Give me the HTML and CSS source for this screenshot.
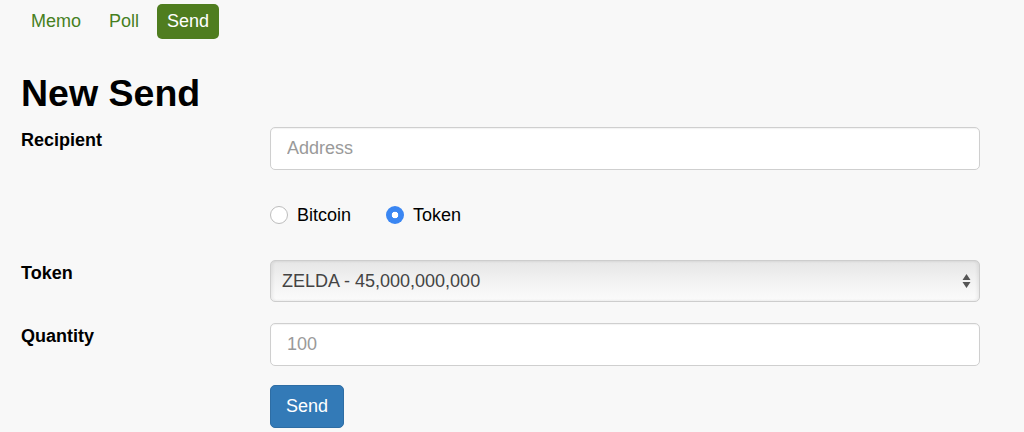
FILE: index.html
```html
<!DOCTYPE html>
<html>
<head>
<meta charset="utf-8">
<link rel="stylesheet" href="styles.css">
</head>
<body>
<div class="page">
  <nav class="nav">
    <a class="nav-link" href="#">Memo</a>
    <a class="nav-link" href="#">Poll</a>
    <a class="nav-link active" href="#">Send</a>
  </nav>
  <h1 class="title">New Send</h1>
  <form class="form">
    <label class="label">Recipient</label>
    <div class="control"><input class="input" type="text" placeholder="Address"></div>

    <div class="label"></div>
    <div class="control radios">
      <label class="radio"><span class="dot"></span>Bitcoin</label>
      <label class="radio"><span class="dot checked"></span>Token</label>
    </div>

    <label class="label">Token</label>
    <div class="control">
      <div class="select-wrap">
        <select class="select"><option>ZELDA - 45,000,000,000</option></select>
        <svg class="arrows" width="9" height="16" viewBox="0 0 9 16"><path d="M4.5 1 L8.5 7 L0.5 7 Z M4.5 15 L0.5 9 L8.5 9 Z" fill="#555"/></svg>
      </div>
    </div>

    <label class="label">Quantity</label>
    <div class="control"><input class="input" type="text" placeholder="100"></div>

    <div class="label"></div>
    <div class="control"><button class="btn" type="button">Send</button></div>
  </form>
</div>
</body>
</html>
```
FILE: styles.css
```css
html, body {
  margin: 0;
  padding: 0;
  background: #f8f8f8;
}
body {
  font-family: "Liberation Sans", Arial, Helvetica, sans-serif;
  font-size: 18px;
  color: #000;
}
.page {
  padding: 4px 0 0 21px;
}
.nav {
  display: flex;
  gap: 8px;
  height: 35px;
}
.nav-link {
  display: block;
  padding: 0 10px;
  line-height: 35px;
  height: 35px;
  color: #47801f;
  text-decoration: none;
  border-radius: 5px;
}
.nav-link.active {
  background: #4f7d1f;
  color: #fff;
}
.title {
  margin: 33px 0 0 0;
  font-size: 37.5px;
  line-height: 42px;
  font-weight: bold;
  height: 42px;
}
.form {
  margin-top: 13px;
  display: grid;
  grid-template-columns: 249px 710px;
}
.label {
  font-weight: bold;
  line-height: 26px;
}
.input {
  box-sizing: border-box;
  width: 710px;
  height: 43px;
  border: 1px solid #cfcfcf;
  border-radius: 5px;
  background: #fff;
  padding: 0 16px;
  font-family: inherit;
  font-size: 18px;
  color: #333;
  box-shadow: inset 0 1px 1px rgba(0,0,0,0.05);
  outline: none;
}
.input::placeholder {
  color: #9a9a9a;
}
.radios {
  display: flex;
  align-items: center;
  gap: 35px;
  margin: 32px 0;
  height: 26px;
  line-height: 26px;
}
.radio {
  display: flex;
  align-items: center;
  gap: 9px;
}
.dot {
  box-sizing: border-box;
  width: 18px;
  height: 18px;
  border-radius: 50%;
  border: 1px solid #bdbdbd;
  background: #fff;
}
.dot.checked {
  border: none;
  background: radial-gradient(circle, #fff 0 3px, #3a86f2 3.6px);
}
.select-wrap {
  position: relative;
  width: 710px;
  height: 42px;
  margin-bottom: 21px;
}
.select {
  -webkit-appearance: none;
  appearance: none;
  box-sizing: border-box;
  width: 710px;
  height: 42px;
  border: 1px solid #cdcdcd;
  border-radius: 5px;
  padding: 0 11px;
  font-family: inherit;
  font-size: 18px;
  color: #444;
  background: linear-gradient(#e6e6e6, #f3f3f3 55%, #fbfbfb);
  box-shadow: inset 2px 0 3px rgba(0,0,0,0.06), inset -2px 0 3px rgba(0,0,0,0.06);
}
.arrows {
  position: absolute;
  right: 9px;
  top: 13px;
}
.btn {
  margin-top: 19px;
  height: 43px;
  padding: 0 15px;
  border: 1px solid #2e6da4;
  border-radius: 5px;
  background: #337ab7;
  color: #fff;
  font-family: inherit;
  font-size: 18px;
}
```
